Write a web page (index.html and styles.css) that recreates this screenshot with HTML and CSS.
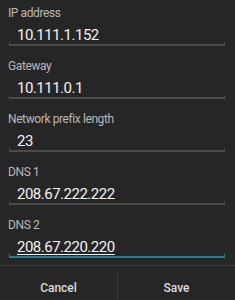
FILE: index.html
```
<!DOCTYPE html>
<html lang="en">
<head>
    <meta charset="UTF-8">
    <meta name="viewport" content="width=device-width, initial-scale=1.0">
    <title>Static IP settings</title>
    <link rel="stylesheet" href="styles.css">
</head>
<body>
    <div class="dialog">
        <div class="field">
            <div class="label">IP address</div>
            <div class="value">10.111.1.152</div>
        </div>
        <div class="field">
            <div class="label">Gateway</div>
            <div class="value">10.111.0.1</div>
        </div>
        <div class="field">
            <div class="label">Network prefix length</div>
            <div class="value">23</div>
        </div>
        <div class="field">
            <div class="label">DNS 1</div>
            <div class="value">208.67.222.222</div>
        </div>
        <div class="field">
            <div class="label">DNS 2</div>
            <div class="value focused"><span class="composing">208.67.220.220</span></div>
        </div>

        <div class="buttons">
            <button class="btn">Cancel</button>
            <div class="divider"></div>
            <button class="btn">Save</button>
        </div>
    </div>
</body>
</html>
```

FILE: styles.css
```
body {
    margin: 0;
    background: #262626;
    font-family: Roboto, "Liberation Sans", sans-serif;
}

.dialog {
    width: 235px;
    height: 300px;
    overflow: hidden;
}

.field {
    padding: 6px 10px 0 8px;
    margin-bottom: 7px;
}

.label {
    font-size: 12px;
    line-height: 14px;
    letter-spacing: -0.4px;
    color: #b8b8b8;
}

.value {
    position: relative;
    margin: 6px 0 0 1px;
    padding-left: 8px;
    font-size: 15px;
    line-height: 18px;
    letter-spacing: -0.5px;
    color: #f2f2f2;
    border-bottom: 2px solid #4a4a4a;
}

/* little end ticks of the holo underline */
.value::before,
.value::after {
    content: "";
    position: absolute;
    bottom: -2px;
    width: 1px;
    height: 4px;
    background: #4a4a4a;
}
.value::before { left: 0; }
.value::after { right: 0; }

.value.focused {
    border-bottom-color: #2c7b8e;
}
.value.focused::before,
.value.focused::after {
    background: #2c7b8e;
}

.composing {
    text-decoration: underline;
    text-decoration-thickness: 1px;
    text-underline-offset: 2px;
}

.buttons {
    display: flex;
    height: 35px;
    border-top: 1px solid #3a3a3a;
}

.btn {
    flex: 1;
    background: none;
    border: none;
    padding: 15px 0 0;
    margin: 0;
    font-family: Roboto, "Liberation Sans", sans-serif;
    font-size: 12px;
    font-weight: 500;
    line-height: 14px;
    color: #dcdcdc;
    align-self: flex-start;
}

.divider {
    width: 1px;
    margin-top: 3px;
    background: #3a3a3a;
}
```
